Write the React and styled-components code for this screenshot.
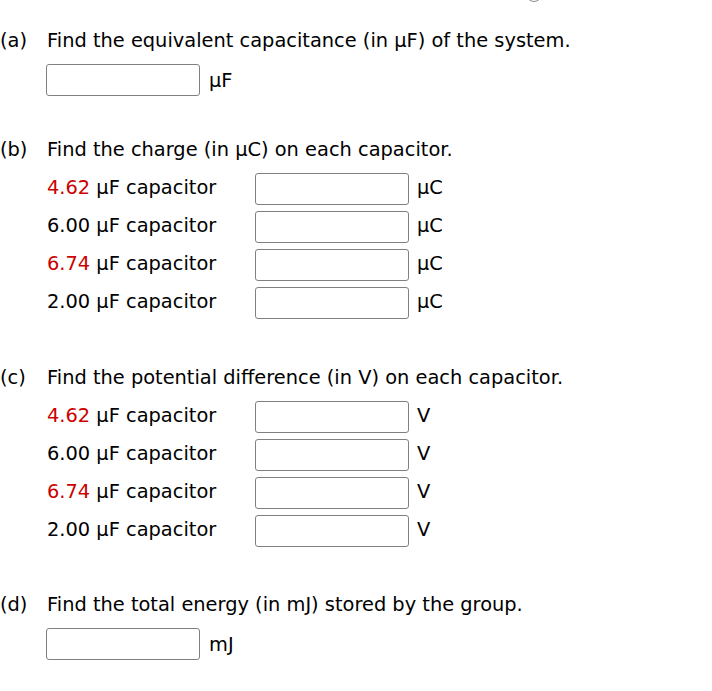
import React from "react";
import styled, { createGlobalStyle } from "styled-components";

const Global = createGlobalStyle`
  body {
    margin: 0;
    background: #fff;
    font-family: "DejaVu Sans", Verdana, sans-serif;
    font-size: 19.4px;
    color: #000;
  }
`;

const Page = styled.div`
  position: relative;
  padding-top: 29px;
`;

const TopCircle = styled.div`
  position: absolute;
  left: 526px;
  top: -14px;
  width: 14px;
  height: 14px;
  border: 1.5px solid #8a8a8a;
  border-radius: 50%;
`;

const Part = styled.section`
  display: grid;
  grid-template-columns: 47px 1fr;
  margin-bottom: ${(p) => p.$space || "42px"};
`;

const Letter = styled.div`
  line-height: 24px;
  white-space: nowrap;
`;

const Body = styled.div`
  display: flex;
  flex-direction: column;
`;

const Prompt = styled.div`
  line-height: 24px;
  white-space: nowrap;
`;

const AnswerLine = styled.div`
  display: flex;
  align-items: center;
  gap: 9px;
  margin-top: 11px;
  margin-left: -1px;
`;

const Rows = styled.div`
  display: flex;
  flex-direction: column;
  gap: 6px;
  margin-top: ${(p) => p.$top || "11px"};
`;

const Row = styled.div`
  display: grid;
  grid-template-columns: 208px 154px auto;
  justify-content: start;
  align-items: center;
`;

const Label = styled.span`
  white-space: nowrap;
  padding-bottom: 3px;
`;

const Red = styled.span`
  color: #cc0000;
`;

const Box = styled.input`
  box-sizing: border-box;
  width: 154px;
  height: 32px;
  border: 1px solid #808080;
  border-radius: 3px;
  background: #fff;
  margin: 0;
  padding: 0 6px;
  font: inherit;
`;

const Unit = styled.span`
  margin-left: ${(p) => p.$gap || "0"};
  padding-bottom: ${(p) => (p.$gap ? "3px" : "0")};
`;

const caps = [
  { value: "4.62", red: true },
  { value: "6.00", red: false },
  { value: "6.74", red: true },
  { value: "2.00", red: false },
];

function CapRows({ unit, top }) {
  return (
    <Rows $top={top}>
      {caps.map((c) => (
        <Row key={c.value}>
          <Label>
            {c.red ? <Red>{c.value}</Red> : c.value} μF capacitor
          </Label>
          <Box type="text" />
          <Unit $gap="8px">{unit}</Unit>
        </Row>
      ))}
    </Rows>
  );
}

export default function App() {
  return (
    <Page>
      <Global />
      <TopCircle />
      <Part>
        <Letter>(a)</Letter>
        <Body>
          <Prompt>Find the equivalent capacitance (in μF) of the system.</Prompt>
          <AnswerLine>
            <Box type="text" />
            <Unit>μF</Unit>
          </AnswerLine>
        </Body>
      </Part>
      <Part $space="47px">
        <Letter>(b)</Letter>
        <Body>
          <Prompt>Find the charge (in μC) on each capacitor.</Prompt>
          <CapRows unit="μC" />
        </Body>
      </Part>
      <Part $space="46px">
        <Letter>(c)</Letter>
        <Body>
          <Prompt>Find the potential difference (in V) on each capacitor.</Prompt>
          <CapRows unit="V" top="11px" />
        </Body>
      </Part>
      <Part>
        <Letter>(d)</Letter>
        <Body>
          <Prompt>Find the total energy (in mJ) stored by the group.</Prompt>
          <AnswerLine>
            <Box type="text" />
            <Unit>mJ</Unit>
          </AnswerLine>
        </Body>
      </Part>
    </Page>
  );
}
